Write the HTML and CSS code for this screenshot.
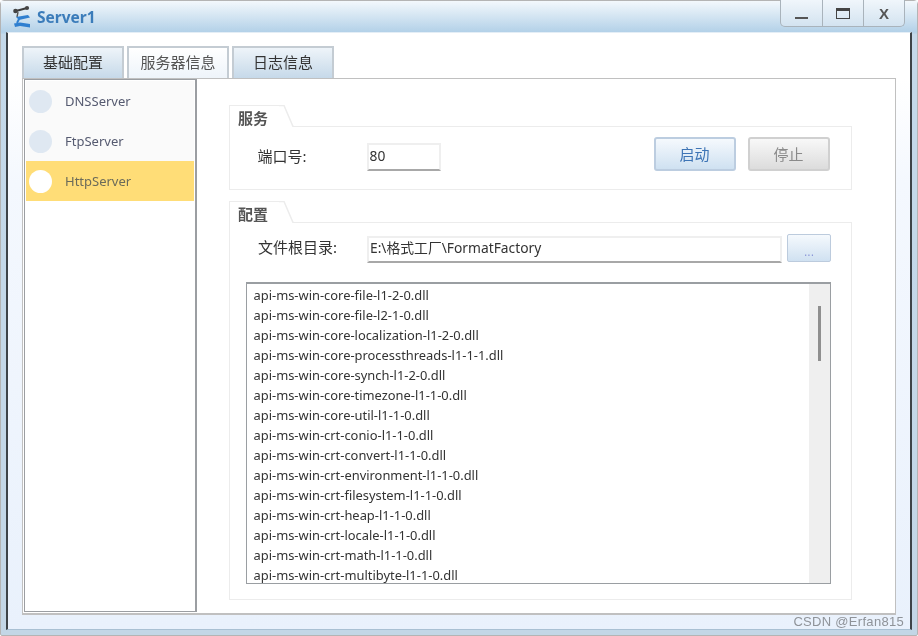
FILE: index.html
```html
<!DOCTYPE html>
<html lang="zh">
<head>
<meta charset="utf-8">
<title>Server1</title>
<link rel="stylesheet" href="styles.css">
</head>
<body>
<div class="window">
  <header class="titlebar">
    <svg class="app-icon" width="20" height="24" viewBox="0 0 20 24">
      <path d="M4 6 L15 3" stroke="#3d3d3d" stroke-width="2.2" fill="none"/>
      <circle cx="3.5" cy="6" r="2.3" fill="#444"/>
      <circle cx="15" cy="3" r="2.1" fill="#444"/>
      <path d="M6 7 L5 12" stroke="#555" stroke-width="1.4"/>
      <path d="M4 12 L16 10 L18 12.5 L7 15 Z" fill="#2f7fd0"/>
      <path d="M7 14 L5 18" stroke="#2f7fd0" stroke-width="2"/>
      <path d="M2 18.5 L8 17.5 L18 19 L18 22.5 L8 21 L3 22 Z" fill="#2f7fd0"/>
    </svg>
    <span class="app-title">Server1</span>
    <div class="win-buttons">
      <button class="win-btn"><span class="glyph-min"></span></button>
      <button class="win-btn"><span class="glyph-max"></span></button>
      <button class="win-btn glyph-close">X</button>
    </div>
  </header>
  <div class="client">
    <nav class="tabs">
      <div class="tab">基础配置</div>
      <div class="tab tab-current">服务器信息</div>
      <div class="tab">日志信息</div>
    </nav>
    <div class="tab-panel">
      <aside class="sidebar">
        <div class="side-item"><span class="dot"></span>DNSServer</div>
        <div class="side-item"><span class="dot"></span>FtpServer</div>
        <div class="side-item side-active"><span class="dot"></span>HttpServer</div>
      </aside>
      <main class="main">
        <section class="group">
          <div class="group-head">
            <div class="group-label">服务</div>
            <svg class="group-notch" width="15" height="22" viewBox="0 0 15 22"><path d="M0 .5 L5 .5 L14 21.5 L15 21.5" fill="none" stroke="#ececec" stroke-width="1.5"/></svg>
            <div class="group-line"></div>
          </div>
          <div class="group-box box-service">
            <label class="field-label label-port">端口号:</label>
            <div class="input input-port">80</div>
            <button class="btn btn-start">启动</button>
            <button class="btn btn-stop">停止</button>
          </div>
        </section>
        <section class="group group-config">
          <div class="group-head">
            <div class="group-label">配置</div>
            <svg class="group-notch" width="15" height="22" viewBox="0 0 15 22"><path d="M0 .5 L5 .5 L14 21.5 L15 21.5" fill="none" stroke="#ececec" stroke-width="1.5"/></svg>
            <div class="group-line"></div>
          </div>
          <div class="group-box box-config">
            <div class="path-row">
              <label class="field-label label-path">文件根目录:</label>
              <div class="input input-path">E:\格式工厂\FormatFactory</div>
              <button class="btn-browse">...</button>
            </div>
            <div class="file-list">
              <ul class="files">
                <li>api-ms-win-core-file-l1-2-0.dll</li>
                <li>api-ms-win-core-file-l2-1-0.dll</li>
                <li>api-ms-win-core-localization-l1-2-0.dll</li>
                <li>api-ms-win-core-processthreads-l1-1-1.dll</li>
                <li>api-ms-win-core-synch-l1-2-0.dll</li>
                <li>api-ms-win-core-timezone-l1-1-0.dll</li>
                <li>api-ms-win-core-util-l1-1-0.dll</li>
                <li>api-ms-win-crt-conio-l1-1-0.dll</li>
                <li>api-ms-win-crt-convert-l1-1-0.dll</li>
                <li>api-ms-win-crt-environment-l1-1-0.dll</li>
                <li>api-ms-win-crt-filesystem-l1-1-0.dll</li>
                <li>api-ms-win-crt-heap-l1-1-0.dll</li>
                <li>api-ms-win-crt-locale-l1-1-0.dll</li>
                <li>api-ms-win-crt-math-l1-1-0.dll</li>
                <li>api-ms-win-crt-multibyte-l1-1-0.dll</li>
              </ul>
              <div class="scrollbar"><div class="thumb"></div></div>
            </div>
          </div>
        </section>
      </main>
    </div>
  </div>
  <div class="watermark">CSDN @Erfan815</div>
</div>
</body>
</html>
```

FILE: styles.css
```css
* { box-sizing: border-box; }
html, body { margin: 0; padding: 0; background: #fff; }
body {
  width: 918px;
  height: 636px;
  overflow: hidden;
  font-family: "Noto Sans", "Noto Sans CJK SC", sans-serif;
  color: #333;
}
.window {
  position: relative;
  width: 918px;
  height: 636px;
  padding: 0 5px 5px 5px;
  display: flex;
  flex-direction: column;
  border: 1px solid #b4b4b4;
  border-radius: 4px 4px 2px 2px;
  background: linear-gradient(#e6f0f8 0, #b4d2e8 32px, #c4d9ea 33px, #c3d6e6 100%);
  filter: blur(.3px);
}
.titlebar {
  height: 31px;
  flex: none;
  display: flex;
  align-items: flex-start;
  margin: 0 -5px;
  padding: 4px 0 0 11px;
  background: linear-gradient(#f3f8fc, #b3d1e8);
}
.app-icon { flex: none; }
.app-title {
  margin: 3px 0 0 5px;
  font-size: 15.5px;
  line-height: 18px;
  font-weight: 700;
  color: #3b7cba;
}
.win-buttons {
  display: flex;
  margin: -5px 12px 0 auto;
  height: 27px;
  border: 1px solid #a9b3bb;
  border-top: 0;
  border-radius: 0 0 5px 5px;
  background: linear-gradient(#f0f6fb, #d3e3f0);
}
.win-btn {
  width: 41px;
  padding: 0;
  border: 0;
  border-left: 1px solid #a9b3bb;
  background: none;
  display: flex;
  align-items: center;
  justify-content: center;
  font: 700 15px "Liberation Sans", sans-serif;
  color: #555;
}
.win-btn:first-child { border-left: 0; }
.glyph-min { width: 13px; height: 2px; margin-top: 9px; background: #555; }
.glyph-max { width: 14px; height: 11px; border: 1px solid #444; border-top-width: 3px; }
.client {
  flex: 1;
  display: flex;
  flex-direction: column;
  padding: 0 14px 14px 14px;
  border-left: 2px solid #3d4348;
  border-right: 2px solid #3d4348;
  border-bottom: 1px solid #a9c0d3;
  border-top: 1px solid #e4eef6;
  background: linear-gradient(#fff 0, #fff 46px, #f4f8fe 150px, #e9f1fc 100%);
}
.tabs { display: flex; gap: 3px; margin-top: 13px; height: 32px; flex: none; }
.tab {
  width: 102px;
  display: flex;
  align-items: center;
  justify-content: center;
  padding-bottom: 3px;
  font-size: 15px;
  color: #333;
  border: 2px solid #c4ccd3;
  border-bottom: 0;
  background: linear-gradient(#eef4f9, #c6d9e9);
}
.tab-current { color: #555; background: linear-gradient(#fff, #eef4fa); }
.tab-panel {
  flex: 1;
  display: flex;
  min-height: 0;
  padding: 0 1px 1px 1px;
  border: 1px solid #c0c0c0;
  border-width: 1px 1px 2px 1px;
  background: #fff;
}
.sidebar {
  width: 173px;
  flex: none;
  padding: 1px 1px 0;
  border: 1px solid #9b9ea2;
  border-width: 1px 2px 1px 1px;
  background: #fff;
}
.side-item {
  height: 40px;
  display: flex;
  align-items: center;
  padding-left: 3px;
  background: #fafafa;
  font-size: 13px;
  color: #555a70;
}
.side-active { background: #ffdd77; color: #6b6b5a; }
.dot {
  width: 23px;
  height: 23px;
  border-radius: 50%;
  margin-right: 13px;
  background: #dfe8f2;
}
.side-active .dot { background: #fff; }
.main { flex: 1; min-width: 0; padding: 26px 42px 0 32px; }
.group-config { margin-top: 11px; }
.group-head { display: flex; height: 22px; }
.group-label {
  width: 50px;
  padding-left: 8px;
  border: 1px solid #ececec;
  border-width: 1px 0 0 1px;
  font-size: 15px;
  line-height: 25px;
  font-weight: 700;
  color: #555;
}
.group-notch { flex: none; }
.group-line { flex: 1; border-bottom: 1.5px solid #ececec; }
.group-box {
  border: 1.5px solid #ececec;
  border-top: 0;
}
.box-service {
  height: 63px;
  display: flex;
  align-items: flex-start;
  padding: 10px 21.5px 0 27.5px;
}
.field-label { font-size: 15px; line-height: 20px; color: #333; }
.label-port { width: 109px; margin-top: 9px; }
.input {
  background: #fff;
  border: 2px solid #efefef;
  border-bottom-color: #a8a8a8;
  font-size: 13.8px;
  color: #333;
  padding: 0 0 3px 1px;
  display: flex;
  align-items: center;
}
.input-port { width: 74px; height: 28px; margin: 6px auto 0 0; }
.btn {
  width: 82px;
  height: 34px;
  padding: 0 0 2px;
  border: 2px solid #c3cfda;
  border-radius: 3px;
  font: 15px "Noto Sans", "Noto Sans CJK SC", sans-serif;
}
.btn-start { color: #3d74b5; background: linear-gradient(#f5f9fd, #cfe1f1); border-color: #bccde0; }
.btn-stop { margin-left: 12px; color: #8a8a8a; background: linear-gradient(#f8f8f8, #dcdcdc); border-color: #d0d0d0; }
.box-config { height: 377px; padding: 11px 20.5px 15px 15.5px; }
.path-row { display: flex; align-items: flex-start; padding-left: 12.5px; margin-right: -1px; }
.label-path { width: 109px; margin-top: 3px; }
.input-path { width: 415px; height: 27px; margin-top: 2px; padding-bottom: 5px; }
.btn-browse {
  width: 44px;
  height: 28px;
  margin-left: 5px;
  padding: 8px 0 0;
  border: 1px solid #bccbdd;
  border-radius: 2px;
  background: linear-gradient(#f5f9fd, #d0e1f1);
  color: #8a96d8;
  font: 12px "Liberation Sans", sans-serif;
}
.file-list {
  display: flex;
  height: 302px;
  margin-top: 19px;
  border: 1px solid #9a9ea2;
  border-top-width: 2px;
  overflow: hidden;
  background: #fff;
}
.files {
  flex: 1;
  list-style: none;
  margin: 0;
  padding: 1px 0 0 7px;
  overflow: hidden;
}
.files li {
  height: 20px;
  line-height: 20px;
  font-size: 12.9px;
  color: #333;
  white-space: nowrap;
}
.scrollbar { width: 21px; flex: none; padding: 22px 0 0 9px; background: #efefef; }
.thumb { width: 3px; height: 55px; background: #8f8f8f; }
.watermark {
  position: absolute;
  right: 13px;
  bottom: 6px;
  font: 13px "Liberation Sans", sans-serif;
  letter-spacing: .3px;
  color: #8f9399;
}
```
